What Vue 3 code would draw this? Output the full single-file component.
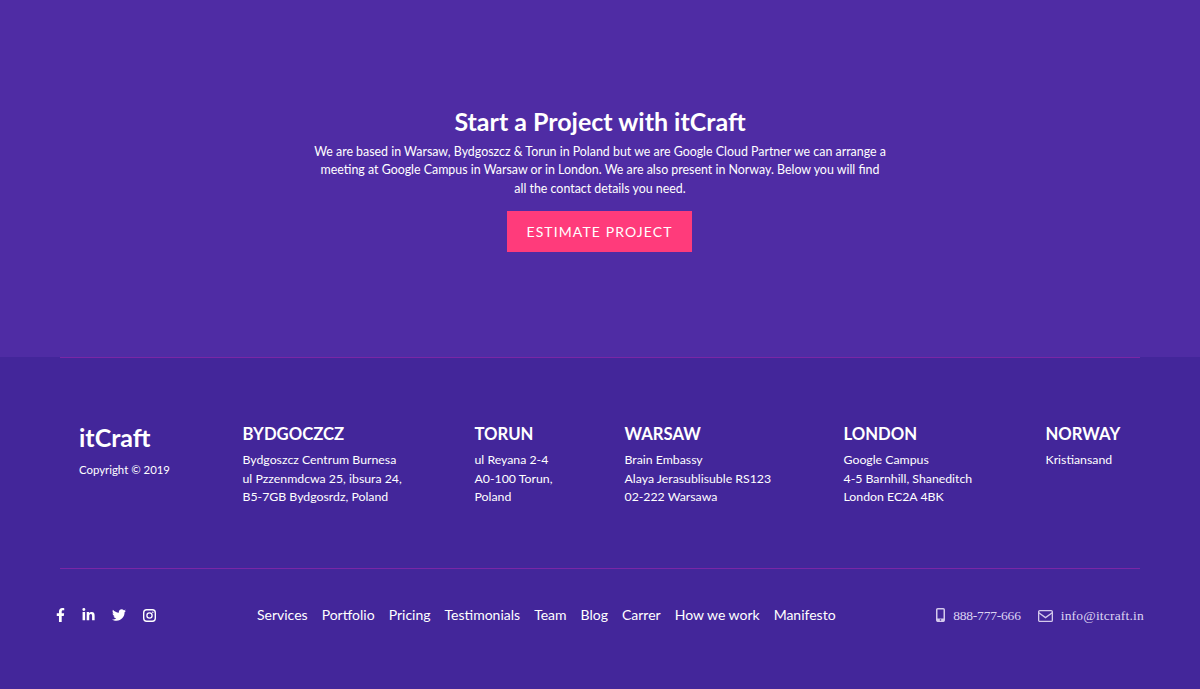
<script setup>
const offices = [
  { name: 'BYDGOCZCZ', lines: ['Bydgoszcz Centrum Burnesa', 'ul Pzzenmdcwa 25, ibsura 24,', 'B5-7GB Bydgosrdz, Poland'], w: 232 },
  { name: 'TORUN', lines: ['ul Reyana 2-4', 'A0-100 Torun,', 'Poland'], w: 150 },
  { name: 'WARSAW', lines: ['Brain Embassy', 'Alaya Jerasublisuble RS123', '02-222 Warsawa'], w: 219 },
  { name: 'LONDON', lines: ['Google Campus', '4-5 Barnhill, Shaneditch', 'London EC2A 4BK'], w: 202 },
  { name: 'NORWAY', lines: ['Kristiansand'], w: 80 },
]
const links = ['Services', 'Portfolio', 'Pricing', 'Testimonials', 'Team', 'Blog', 'Carrer', 'How we work', 'Manifesto']
</script>

<template>
  <div class="page">
    <section class="hero">
      <h2 class="hero-title">Start a Project with itCraft</h2>
      <p class="hero-text">We are based in Warsaw, Bydgoszcz &amp; Torun in Poland but we are Google Cloud Partner we can arrange a meeting at Google Campus in Warsaw or in London. We are also present in Norway. Below you will find all the contact details you need.</p>
      <a class="cta">ESTIMATE PROJECT</a>
    </section>
    <footer class="footer">
      <div class="rule"></div>
      <div class="info">
        <div class="brand">
          <div class="logo">itCraft</div>
          <div class="copy">Copyright © 2019</div>
        </div>
        <div v-for="o in offices" :key="o.name" class="office" :style="{ width: o.w + 'px' }">
          <h4 class="office-name">{{ o.name }}</h4>
          <div v-for="l in o.lines" :key="l" class="office-line">{{ l }}</div>
        </div>
      </div>
      <div class="rule"></div>
      <div class="bottom">
        <div class="social">
          <svg viewBox="0 0 320 512" width="9" height="14"><path fill="#fff" d="M279 288l14-93h-89v-60c0-25 12-50 52-50h41V6s-37-6-72-6c-73 0-121 44-121 125v70H23v93h81v224h100V288z"/></svg>
          <svg viewBox="0 0 448 512" width="13" height="14"><path fill="#fff" d="M100 448H7V149h93zM54 108C24 108 0 83 0 54a54 54 0 0 1 108 0c0 29-24 54-54 54zm394 340h-93V302c0-35-1-79-48-79-48 0-56 38-56 77v148h-93V149h89v41h1c12-24 43-48 88-48 94 0 112 62 112 142v164z"/></svg>
          <svg viewBox="0 0 512 512" width="14" height="14"><path fill="#fff" d="M459 152c.3 4.500.3 9.100.3 13.600 0 138.700-105.600 298.600-298.600 298.600-59.500 0-114.700-17.200-161.100-47.100 8.400 1 16.600 1.300 25.300 1.300 49.100 0 94.200-16.600 130.300-44.800-46.100-1-84.800-31.200-98.100-72.800 6.500 1 13 1.600 19.800 1.600 9.400 0 18.800-1.300 27.600-3.600-48.100-9.700-84.100-52-84.100-103v-1.300c14 7.800 30.200 12.700 47.400 13.300-28.300-18.800-46.800-51-46.800-87.400 0-19.500 5.200-37.400 14.300-53 51.700 63.700 129.300 105.300 216.400 109.800-1.600-7.800-2.600-15.900-2.600-24 0-57.800 46.800-104.900 104.900-104.900 30.200 0 57.500 12.700 76.700 33.100 23.700-4.500 46.500-13.300 66.600-25.300-7.800 24.200-24.200 44.800-46.100 57.800 21.100-2.300 41.600-8.100 60.400-16.200-14.300 20.800-32.200 39.300-52.600 54.200z"/></svg>
          <svg viewBox="0 0 14 14" width="13" height="13"><rect x=".75" y=".75" width="12.500" height="12.500" rx="3.200" fill="none" stroke="#fff" stroke-width="1.500"/><circle cx="7" cy="7" r="2.800" fill="none" stroke="#fff" stroke-width="1.400"/><circle cx="10.600" cy="3.400" r=".8" fill="#fff"/></svg>
        </div>
        <nav class="nav">
          <a v-for="l in links" :key="l" class="nav-link">{{ l }}</a>
        </nav>
        <div class="contact">
          <span class="c-item">
            <svg class="i-phone" viewBox="0 0 9 14" width="9" height="14"><path fill="none" stroke="#d4c9ec" stroke-width="1.500" d="M1.750.75h5.500a1 1 0 0 1 1 1v10.500a1 1 0 0 1-1 1h-5.500a1 1 0 0 1-1-1V1.750a1 1 0 0 1 1-1z"/><path fill="#d4c9ec" d="M1 10.500h7v3H1z"/><circle cx="4.500" cy="12" r=".8" fill="#43269a"/></svg>
            <span class="phone">888-777-666</span>
          </span>
          <span class="c-item">
            <svg class="i-mail" viewBox="0 0 15 12" width="15" height="12"><rect x=".65" y=".65" width="13.700" height="10.700" rx="1.200" fill="none" stroke="#d4c9ec" stroke-width="1.300"/><path fill="none" stroke="#d4c9ec" stroke-width="1.300" d="M.8 2.800l6.700 4.800 6.700-4.800"/></svg>
            <span class="mail">info@itcraft.in</span>
          </span>
        </div>
      </div>
    </footer>
  </div>
</template>

<style scoped>
.page {
  width: 1200px;
  height: 689px;
  overflow: hidden;
  font-family: Lato, "Noto Sans", sans-serif;
  color: #fff;
  background: #43269a;
}
.hero {
  height: 357px;
  box-sizing: border-box;
  padding-top: 105px;
  background: #4f2ca4;
  display: flex;
  flex-direction: column;
  align-items: center;
  text-align: center;
}
.hero-title {
  margin: 0;
  font-size: 25px;
  line-height: 33px;
  font-weight: 700;
}
.hero-text {
  margin: 5px 0 0;
  width: 573px;
  font-size: 12.400px;
  line-height: 18.400px;
}
.cta {
  margin: 13px 1px 0 0;
  width: 185px;
  height: 41px;
  box-sizing: border-box;
  display: flex;
  align-items: center;
  justify-content: center;
  background: #ff3b7b;
  font-size: 14px;
  letter-spacing: 1.100px;
}
.rule {
  height: 1px;
  margin: 0 60px;
  background: #7a26a6;
}
.info {
  height: 210px;
  box-sizing: border-box;
  padding: 65px 0 0 79px;
  display: flex;
}
.brand {
  width: 163.500px;
}
.logo {
  font-size: 25px;
  line-height: 28px;
  font-weight: 700;
}
.copy {
  margin-top: 11px;
  font-size: 11.400px;
  line-height: 16px;
}
.office-name {
  margin: 0;
  font-size: 16.700px;
  line-height: 22px;
  font-weight: 700;
}
.office-line {
  font-size: 12.300px;
  line-height: 18.500px;
}
.office-name + .office-line {
  margin-top: 6px;
}
.bottom {
  position: relative;
  height: 93px;
}
.social {
  position: absolute;
  left: 56px;
  top: 39px;
  display: flex;
  align-items: center;
  gap: 17px;
}
.nav {
  position: absolute;
  left: 257px;
  top: 36px;
  display: flex;
  gap: 14px;
}
.nav-link {
  font-size: 14px;
  line-height: 19px;
  color: #fff;
}
.contact {
  position: absolute;
  right: 56px;
  top: 38px;
  display: flex;
  gap: 17px;
  color: #ddd4f2;
  font-family: "Liberation Serif", serif;
  font-size: 13.500px;
  line-height: 18px;
}
.phone {
  letter-spacing: -0.200px;
}
.mail {
  letter-spacing: 0.200px;
}
.c-item {
  display: flex;
  align-items: center;
  gap: 8px;
}
.i-phone {
  margin-bottom: 3px;
}
.i-mail {
  margin-bottom: 1px;
}
</style>
